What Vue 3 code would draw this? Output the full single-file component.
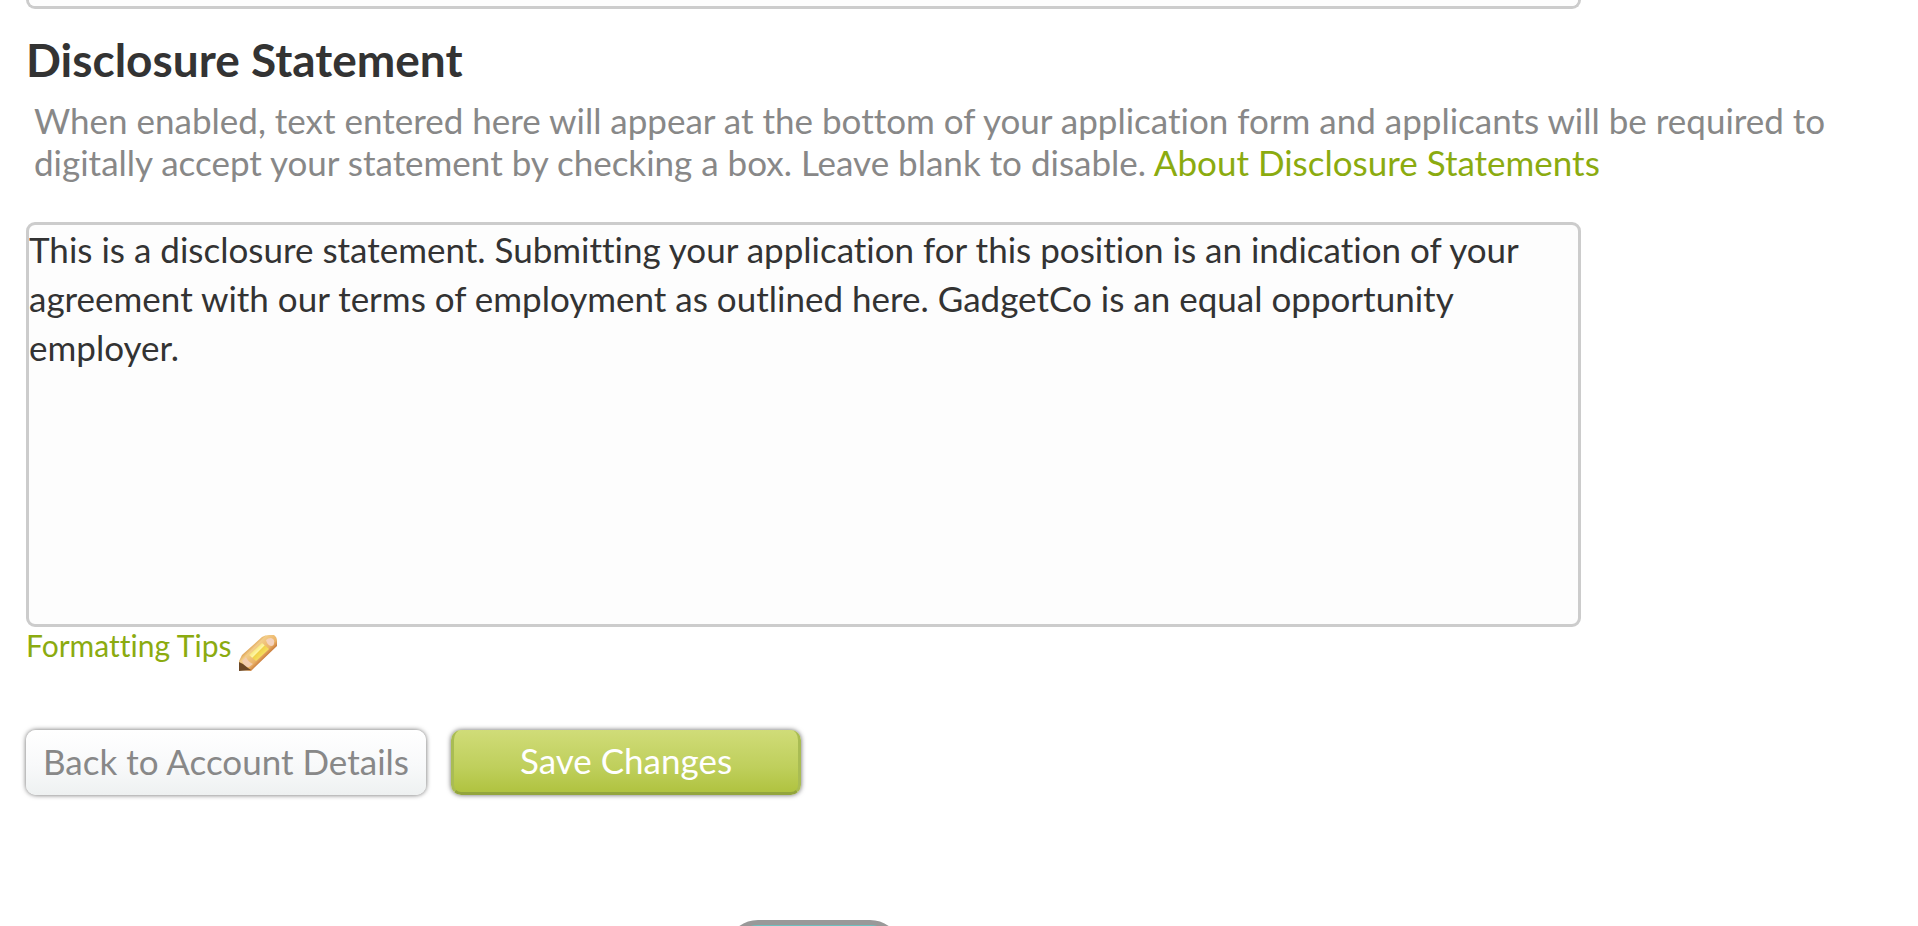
<script setup>
import { ref } from 'vue'

const previousField = ref('')
const statement = ref(
  'This is a disclosure statement. Submitting your application for this position is an indication of your agreement with our terms of employment as outlined here. GadgetCo is an equal opportunity employer.'
)
</script>

<template>
  <main class="page">
    <form class="section" @submit.prevent>
      <textarea v-model="previousField" class="field previous" aria-label="Previous statement"></textarea>

      <h2><label for="disclosure">Disclosure Statement</label></h2>
      <p id="disclosure-help" class="help">
        When enabled, text entered here will appear at the bottom of your application form and applicants will be required to digitally accept your statement by checking a box. Leave blank to disable.
        <a href="#about">About Disclosure Statements</a>
      </p>
      <textarea
        id="disclosure"
        v-model="statement"
        class="field statement"
        aria-describedby="disclosure-help"
        spellcheck="false"
      ></textarea>

      <a class="tips" href="#formatting">
        <span>Formatting Tips</span>
        <svg class="pencil" viewBox="0 0 38 36" aria-hidden="true">
          <defs>
            <linearGradient id="wood" gradientUnits="userSpaceOnUse" x1="10" y1="10" x2="26" y2="26">
              <stop offset="0" stop-color="#d08a3c" />
              <stop offset="0.25" stop-color="#f3cd88" />
              <stop offset="0.7" stop-color="#ebb368" />
              <stop offset="1" stop-color="#b85f24" />
            </linearGradient>
            <linearGradient id="paint" gradientUnits="userSpaceOnUse" x1="14" y1="12" x2="24" y2="22">
              <stop offset="0" stop-color="#f3dc5c" />
              <stop offset="0.45" stop-color="#fdf5a4" />
              <stop offset="0.55" stop-color="#f0d24a" />
              <stop offset="1" stop-color="#f8e468" />
            </linearGradient>
          </defs>
          <path d="M0 35 L0 26 L3 20 L23 2 Q26 0 30 0 L35 0 Q38 2 38 6 L38 11 L16 32 L12 36 Z" fill="url(#wood)" />
          <path d="M10 20 L23 8 L30 14 L17 26 Z" fill="url(#paint)" />
          <path d="M27 5 Q29 3 32 3 Q36 4 35 8 Q35 11 32 11 Q28 10 27 5 Z" fill="#f4d2bd" />
          <path d="M3 26 L7 22 Q9 27 14 29 L10 32 L6 32 Z" fill="#f2cdb0" />
          <path d="M0 27 L4 29 L9 33 L12 35 L0 36 Z" fill="#6b4726" />
        </svg>
      </a>

      <div class="actions">
        <button class="button back" type="button">Back to Account Details</button>
        <button class="button save" type="submit">Save Changes</button>
      </div>
    </form>

    <div class="badge"></div>
  </main>
</template>

<style>
body {
  background: #fff;
  overflow: hidden;
}
</style>

<style scoped>
.page {
  display: flex;
  flex-direction: column;
  height: 100vh;
  overflow: hidden;
  font-family: Lato, 'Open Sans', sans-serif;
  font-variant-ligatures: none;
  color: #333;
}

.section {
  display: flex;
  flex-direction: column;
  align-items: flex-start;
  flex: none;
  padding: 0 26px;
}

.field {
  display: block;
  box-sizing: border-box;
  width: calc(84% - 12px);
  margin: 0;
  padding: 0;
  border: 3px solid #ccc;
  border-radius: 9px;
  background: #fdfdfd;
  color: #333;
  font-family: inherit;
  font-variant-ligatures: none;
  font-size: 35px;
  line-height: 49px;
  resize: none;
  outline: none;
}

.previous {
  height: 9px;
  border-top: 0;
  border-radius: 0 0 9px 9px;
}

.statement {
  height: 405px;
}

h2 {
  margin: 24px 0 0;
  font-size: 46px;
  line-height: 54px;
  font-weight: 700;
}

.help {
  margin: 12px 0 39px;
  padding: 0 8px;
  color: #888;
  font-size: 35px;
  line-height: 42px;
}

a {
  color: #8bab10;
  text-decoration: none;
}

.tips {
  display: flex;
  align-items: flex-start;
  gap: 8px;
  margin-bottom: 59px;
  font-size: 30px;
  line-height: 36px;
}

.pencil {
  width: 38px;
  height: 36px;
  margin-top: 8px;
}

.actions {
  display: flex;
  gap: 25px;
}

.button {
  box-sizing: border-box;
  height: 65px;
  margin: 0;
  padding: 0 16px 2px;
  border-radius: 10px;
  font-family: inherit;
  font-variant-ligatures: none;
  font-size: 35px;
  line-height: 42px;
}

.back {
  min-width: 400px;
  padding-bottom: 4px;
  border: 0;
  background: linear-gradient(#fff, #f8f9fa 55%, #eef1f1);
  box-shadow: 0 0 5px rgba(0, 0, 0, 0.6);
  color: #888;
}

.save {
  min-width: 350px;
  border: 3px solid #a9bc53;
  border-top: 0;
  border-bottom-color: #93a53c;
  background: linear-gradient(#d0dc78, #bfcf5c 60%, #b0c340);
  box-shadow: 0 0 5px rgba(0, 0, 0, 0.6);
  color: #fff;
}

.badge {
  flex: none;
  box-sizing: border-box;
  width: 176px;
  height: 90px;
  margin: 125px 0 0 726px;
  border: 5px solid #999;
  border-radius: 32px;
  background: #6cc0bf;
}
</style>
